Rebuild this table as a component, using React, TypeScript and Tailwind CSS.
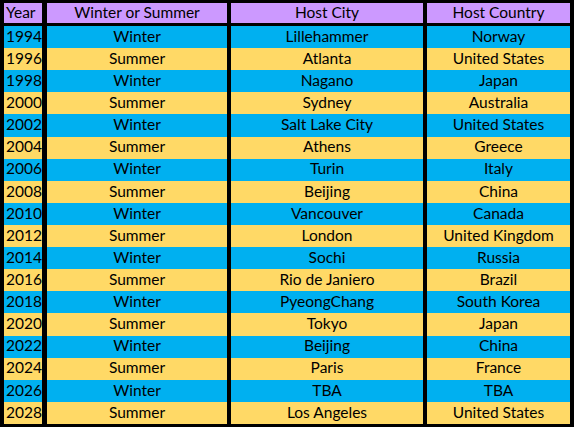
import React from "react";

const rows: [string, string, string, string][] = [
  ["1994", "Winter", "Lillehammer", "Norway"],
  ["1996", "Summer", "Atlanta", "United States"],
  ["1998", "Winter", "Nagano", "Japan"],
  ["2000", "Summer", "Sydney", "Australia"],
  ["2002", "Winter", "Salt Lake City", "United States"],
  ["2004", "Summer", "Athens", "Greece"],
  ["2006", "Winter", "Turin", "Italy"],
  ["2008", "Summer", "Beijing", "China"],
  ["2010", "Winter", "Vancouver", "Canada"],
  ["2012", "Summer", "London", "United Kingdom"],
  ["2014", "Winter", "Sochi", "Russia"],
  ["2016", "Summer", "Rio de Janiero", "Brazil"],
  ["2018", "Winter", "PyeongChang", "South Korea"],
  ["2020", "Summer", "Tokyo", "Japan"],
  ["2022", "Winter", "Beijing", "China"],
  ["2024", "Summer", "Paris", "France"],
  ["2026", "Winter", "TBA", "TBA"],
  ["2028", "Summer", "Los Angeles", "United States"],
];

export default function App() {
  return (
    <div
      className="w-[574px] h-[427px] bg-black pt-[3px] pb-[3px] pl-[4px] pr-[3px] flex flex-col text-[15.5px] text-black leading-none"
      style={{ fontFamily: "Lato, 'Liberation Sans', sans-serif" }}
    >
      <div className="grid grid-cols-[38px_181px_192px_143px] gap-x-[4px] h-[20px] mb-[3px] [&>div]:bg-[#cc99ff]">
        <div className="flex items-center pl-[2px]">Year</div>
        <div className="flex items-center justify-center ml-[1px]">Winter or Summer</div>
        <div className="flex items-center justify-center">Host City</div>
        <div className="flex items-center justify-center">Host Country</div>
      </div>
      <div className="flex-1 flex flex-col">
        {rows.map((r, i) => (
          <div
            key={r[0]}
            className={`flex-1 grid grid-cols-[38px_181px_192px_143px] gap-x-[4px] ${
              i % 2 === 0 ? "[&>div]:bg-[#00b0f0]" : "[&>div]:bg-[#ffd966]"
            }`}
          >
            <div className="flex items-center pl-[2px] pb-[1px]">{r[0]}</div>
            <div className="flex items-center justify-center ml-[1px] pb-[1px]">{r[1]}</div>
            <div className="flex items-center justify-center pb-[1px]">{r[2]}</div>
            <div className="flex items-center justify-center pb-[1px]">{r[3]}</div>
          </div>
        ))}
      </div>
    </div>
  );
}
